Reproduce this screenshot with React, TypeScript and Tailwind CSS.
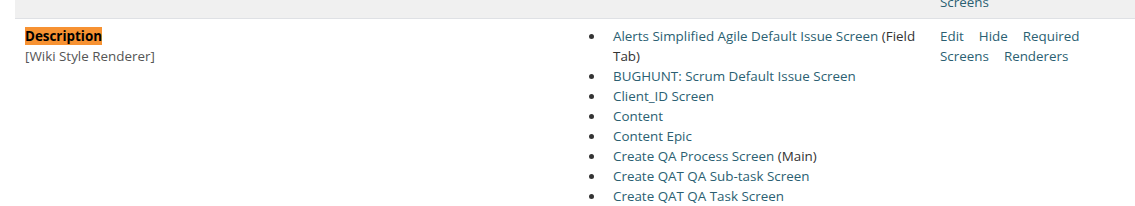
const screens: { name: string; note?: string }[] = [
  { name: "Alerts Simplified Agile Default Issue Screen", note: "(Field Tab)" },
  { name: "BUGHUNT: Scrum Default Issue Screen" },
  { name: "Client_ID Screen" },
  { name: "Content" },
  { name: "Content Epic" },
  { name: "Create QA Process Screen", note: "(Main)" },
  { name: "Create QAT QA Sub-task Screen" },
  { name: "Create QAT QA Task Screen" },
];

export default function App() {
  return (
    <div
      className="h-[206px] w-[1135px] overflow-hidden bg-white pl-[15px] text-[13.4px] leading-[20px] text-[#333]"
      style={{ fontFamily: '"Open Sans", "Noto Sans", sans-serif' }}
    >
      <table className="w-[1120px] table-fixed border-collapse">
        <colgroup>
          <col className="w-[580px]" />
          <col className="w-[335px]" />
          <col className="w-[165px]" />
          <col />
        </colgroup>
        <thead>
          <tr className="border-b border-[#dfe1e5] bg-[#f0f0f0]">
            <th className="p-0" />
            <th className="p-0" />
            <th className="p-0 text-left font-normal">
              <div className="h-[18px] overflow-hidden px-[10px] text-[#2b5f72]">
                <div className="-mt-[8px]">Screens</div>
              </div>
            </th>
            <th className="p-0" />
          </tr>
        </thead>
        <tbody>
          <tr className="align-top">
            <td className="px-[10px] pt-[7px]">
              <div>
                <span className="bg-[#f79232] font-bold text-black">Description</span>
              </div>
              <div className="text-[#555]">[Wiki Style Renderer]</div>
            </td>
            <td className="pt-[7px] pr-[10px]">
              <ul className="list-disc pl-[10px] marker:text-[#333]">
                {screens.map((s) => (
                  <li key={s.name} className="pl-[8px]">
                    <a className="text-[#2b5f72]" href="#">
                      {s.name}
                    </a>
                    {s.note && " " + s.note}
                  </li>
                ))}
              </ul>
            </td>
            <td className="px-[10px] pt-[7px]">
              <div className="flex flex-wrap gap-x-[15px] text-[#2b5f72]">
                <a href="#">Edit</a>
                <a href="#">Hide</a>
                <a href="#">Required</a>
                <a href="#">Screens</a>
                <a href="#">Renderers</a>
              </div>
            </td>
            <td />
          </tr>
        </tbody>
      </table>
    </div>
  );
}
